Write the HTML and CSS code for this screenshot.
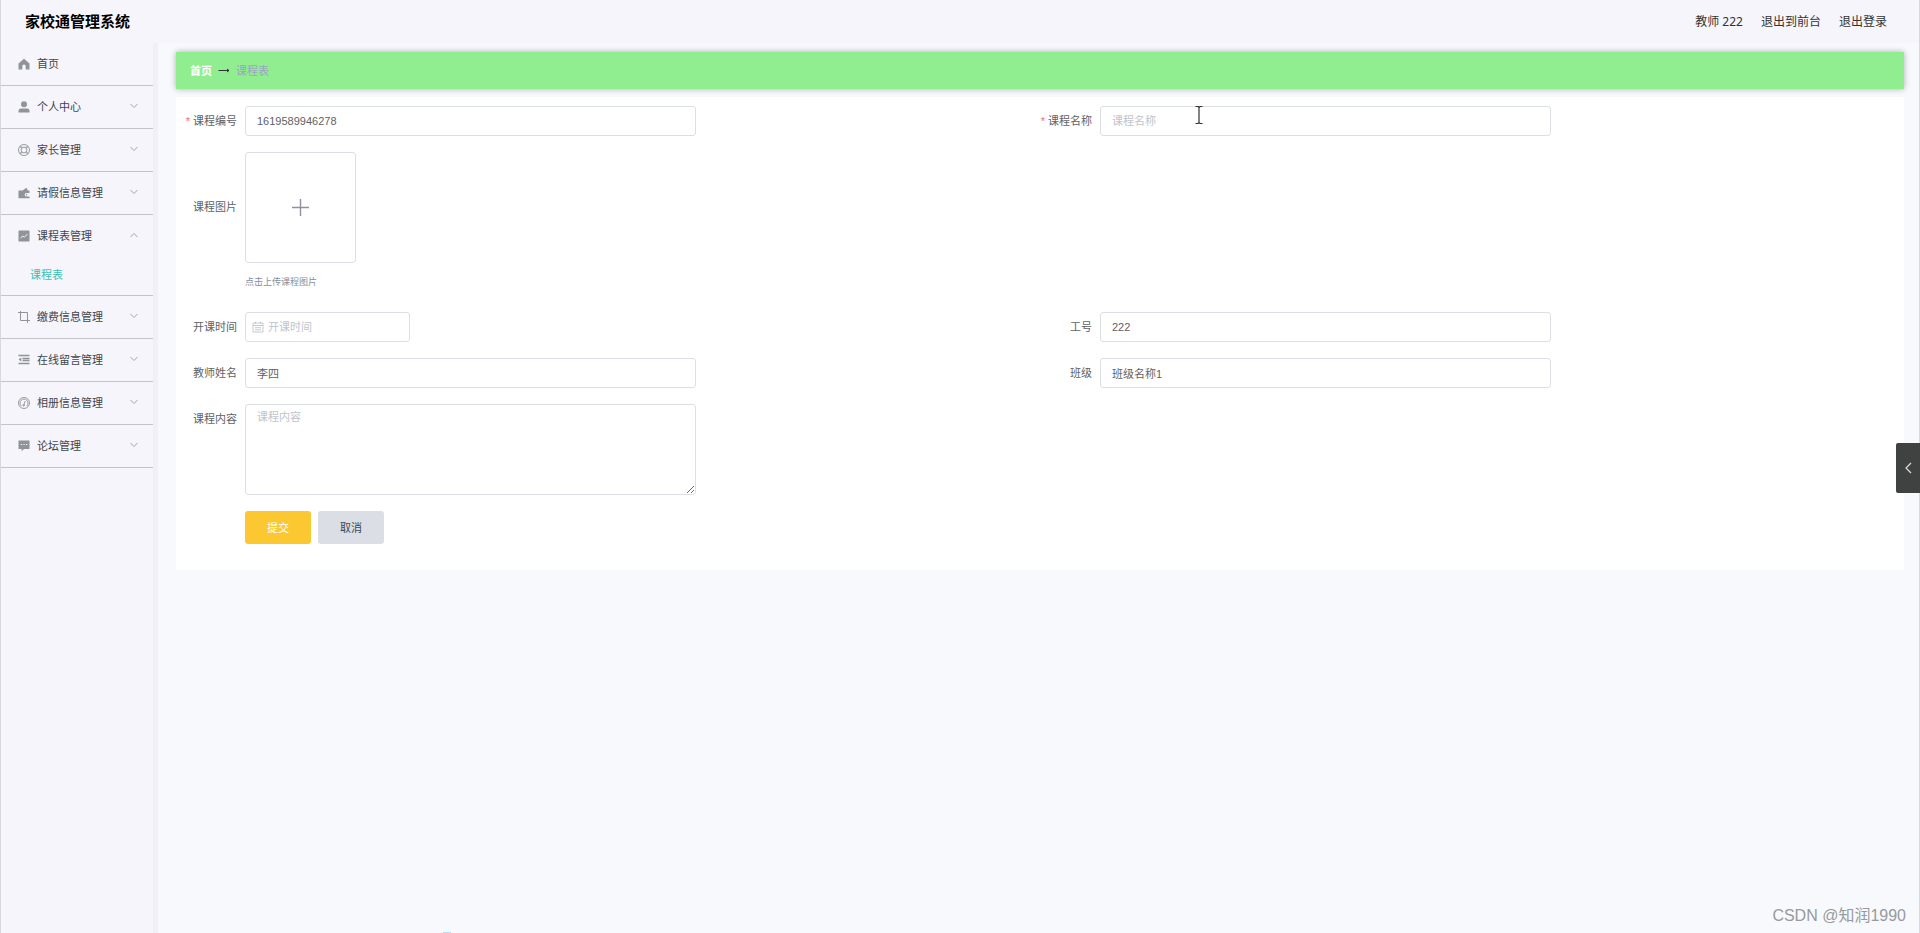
FILE: index.html
```html
<!DOCTYPE html>
<html lang="zh-CN">
<head>
<meta charset="utf-8">
<title>家校通管理系统</title>
<link rel="stylesheet" href="styles.css">
</head>
<body>
<svg class="defs" aria-hidden="true">
  <symbol id="down" viewBox="0 0 10 10"><path d="M1.5 2 5 5.500 8.500 2" fill="none" stroke="currentColor"/></symbol>
  <symbol id="up" viewBox="0 0 10 10"><path d="M1.5 6 5 2.500 8.500 6" fill="none" stroke="currentColor"/></symbol>
</svg>
<div class="app">
  <header class="header">
    <h1 class="title">家校通管理系统</h1>
    <nav class="user-nav">
      <span>教师 222</span>
      <a href="#">退出到前台</a>
      <a href="#">退出登录</a>
    </nav>
  </header>
  <div class="body">
    <aside class="sidebar">
      <ul class="menu">
        <li class="menu-item"><a class="menu-link" href="#">
          <svg class="icon" viewBox="0 0 12 12"><path fill="currentColor" d="M6 .8 11.500 5.500V11.500H7.700V8.200a1.700 1.700 0 0 0-3.400 0v3.300H.5v-6z"/></svg>
          <span>首页</span></a></li>
        <li class="menu-item"><a class="menu-link" href="#">
          <svg class="icon" viewBox="0 0 12 12"><circle cx="6" cy="3.300" r="3" fill="currentColor"/><path fill="currentColor" d="M.5 11.500V10q0-2.500 2.500-2.500h6q2.500 0 2.500 2.500v1.500z"/></svg>
          <span>个人中心</span><svg class="arrow"><use href="#down"/></svg></a></li>
        <li class="menu-item"><a class="menu-link" href="#">
          <svg class="icon" viewBox="0 0 12 12" fill="none" stroke="currentColor" stroke-width=".9"><circle cx="6" cy="6" r="5.500"/><circle cx="6" cy="6" r="2.900"/><path d="M2.300 1.900 4.200 3.700M1.800 2.500 3.600 4.300M9.700 1.900 7.800 3.700M10.200 2.500 8.400 4.300M2.300 10.100 4.200 8.300M1.800 9.500 3.600 7.700M9.700 10.100 7.800 8.300M10.200 9.500 8.400 7.700"/></svg>
          <span>家长管理</span><svg class="arrow"><use href="#down"/></svg></a></li>
        <li class="menu-item"><a class="menu-link" href="#">
          <svg class="icon" viewBox="0 0 12 12"><path fill="currentColor" d="M.5 3.500h4L8.500.8l1.300 2.700h1.700v2.600H8.300a1.500 1.500 0 0 0 0 3.300h3.200v1.900H.5z"/><circle cx="8.600" cy="7.700" r=".8" fill="currentColor"/></svg>
          <span>请假信息管理</span><svg class="arrow"><use href="#down"/></svg></a></li>
        <li class="menu-item"><a class="menu-link" href="#">
          <svg class="icon" viewBox="0 0 12 12"><rect x=".5" y=".5" width="11" height="11" rx=".6" fill="currentColor"/><path d="M2.500 8.300 4.600 6l1.800 1.200L9.500 4" fill="none" stroke="#f5f5fb"/></svg>
          <span>课程表管理</span><svg class="arrow"><use href="#up"/></svg></a>
          <a class="sub-link" href="#">课程表</a></li>
        <li class="menu-item"><a class="menu-link" href="#">
          <svg class="icon" viewBox="0 0 12 12" fill="none" stroke="currentColor"><path d="M2.500 0v9.500H12M0 1.500h9.500V12"/></svg>
          <span>缴费信息管理</span><svg class="arrow"><use href="#down"/></svg></a></li>
        <li class="menu-item"><a class="menu-link" href="#">
          <svg class="icon" viewBox="0 0 12 12"><path d="M.5 1.500h11M4.500 4.500h7M4.500 6.500h7M.5 9.500h11" stroke="currentColor" stroke-width="1.300"/><path d="M.5 5.500 3.300 3.500v4z" fill="currentColor"/></svg>
          <span>在线留言管理</span><svg class="arrow"><use href="#down"/></svg></a></li>
        <li class="menu-item"><a class="menu-link" href="#">
          <svg class="icon" viewBox="0 0 12 12" fill="none" stroke="currentColor" stroke-width=".9"><circle cx="6" cy="6" r="5.500"/><path d="M3.300 9a4 4 0 1 1 5.400 0M5.700 8.500 7.200 4"/><circle cx="5.700" cy="8.300" r=".8"/></svg>
          <span>相册信息管理</span><svg class="arrow"><use href="#down"/></svg></a></li>
        <li class="menu-item"><a class="menu-link" href="#">
          <svg class="icon" viewBox="0 0 12 12"><path fill="currentColor" d="M.5.500h11v8.500H6L3.700 11.300V9H.5z"/><path d="M2.800 4.500h1.300M5.400 4.500h1.300M8 4.500h1.300" stroke="#f5f5fb" stroke-width="1.200"/></svg>
          <span>论坛管理</span><svg class="arrow"><use href="#down"/></svg></a></li>
      </ul>
    </aside>
    <main class="main">
      <nav class="breadcrumb">
        <a class="crumb-home" href="#">首页</a>
        <svg class="crumb-arrow" viewBox="0 0 12 8"><path d="M.5 3.500h10.500M9 2 11 3.500 9 5" fill="none" stroke="currentColor"/></svg>
        <span class="crumb-current">课程表</span>
      </nav>
      <form class="card">
        <div class="field">
          <label class="label required" for="code">课程编号</label>
          <input class="input" id="code" type="text" value="1619589946278">
        </div>
        <div class="field">
          <label class="label required" for="name">课程名称</label>
          <input class="input" id="name" type="text" placeholder="课程名称">
        </div>
        <div class="field wide">
          <label class="label label-upload" for="picture">课程图片</label>
          <div class="upload">
            <button class="upload-box" id="picture" type="button" aria-label="上传课程图片">
              <svg class="plus" viewBox="0 0 17 17"><path d="M8.500 0v17M0 8.500h17" stroke="currentColor" stroke-width="1.400"/></svg>
            </button>
            <p class="tip">点击上传课程图片</p>
          </div>
        </div>
        <div class="field">
          <label class="label" for="time">开课时间</label>
          <div class="date">
            <svg class="calendar" viewBox="0 0 12 12" fill="none" stroke="currentColor" stroke-width=".9"><path d="M1 2h10v9H1zM1 4.500h10M3.500.7V3M8.500.7V3M3 6.700h6M3 8.800h6"/></svg>
            <input class="input input-date" id="time" type="text" placeholder="开课时间">
          </div>
        </div>
        <div class="field">
          <label class="label" for="job">工号</label>
          <input class="input" id="job" type="text" value="222">
        </div>
        <div class="field">
          <label class="label" for="teacher">教师姓名</label>
          <input class="input" id="teacher" type="text" value="李四">
        </div>
        <div class="field">
          <label class="label" for="class">班级</label>
          <input class="input" id="class" type="text" value="班级名称1">
        </div>
        <div class="field wide">
          <label class="label" for="content">课程内容</label>
          <textarea class="input textarea" id="content" placeholder="课程内容"></textarea>
        </div>
        <div class="actions wide">
          <button class="btn btn-primary" type="button">提交</button>
          <button class="btn" type="button">取消</button>
        </div>
      </form>
    </main>
  </div>
  <button class="drawer" type="button" aria-label="展开"><svg class="drawer-icon" viewBox="0 0 8 12"><path d="M7 1 2 6l5 5" fill="none" stroke="currentColor" stroke-width="1.200"/></svg></button>
  <svg class="cursor" viewBox="0 0 8 18"><path d="M.5.500h2.500L4 1.500 5 .5h2.500M4 1.500v15M.5 17.500H3l1-1 1 1h2.500" fill="none" stroke="#333" stroke-width="1.200"/></svg>
  <span class="spot"></span>
  <span class="watermark">CSDN @知润1990</span>
</div>
</body>
</html>
```
FILE: styles.css
```css
* {
  box-sizing: border-box;
}

body {
  margin: 0;
  font-family: "Liberation Sans", "Noto Sans CJK SC", sans-serif;
  font-size: 11px;
  line-height: 16px;
  color: #606266;
}

a {
  color: inherit;
  text-decoration: none;
}

.defs {
  position: absolute;
  width: 0;
  height: 0;
}

.app {
  position: relative;
  display: flex;
  flex-direction: column;
  min-height: 100vh;
  border: 0 solid #d8d9de;
  border-width: 0 1px;
  background: #f7f9fd;
}

.header {
  display: flex;
  align-items: center;
  justify-content: space-between;
  height: 43px;
  padding: 0 32px 0 24px;
  background: #f5f5fb;
}

.title {
  margin: 0;
  font-size: 15px;
  line-height: 20px;
  color: #000;
}

.user-nav {
  display: flex;
  gap: 18px;
  font-family: "Noto Sans", "Noto Sans CJK SC", sans-serif;
  font-size: 12px;
  color: #333;
}

.body {
  display: flex;
  flex: 1;
}

.sidebar {
  flex: none;
  width: 157px;
  padding-right: 5px;
  background: linear-gradient(to left, #f2f0f5 5px, #f5f5fb 5px);
}

.menu {
  margin: 0;
  padding: 0;
  list-style: none;
}

.menu-item {
  border-bottom: 1px solid #c3c3ca;
}

.menu-link {
  display: flex;
  align-items: center;
  height: 42px;
  padding: 0 14px 0 17px;
  color: #42454c;
}

.icon {
  width: 12px;
  height: 12px;
  margin-right: 7px;
  color: #909399;
}

.arrow {
  width: 10px;
  height: 10px;
  margin-left: auto;
  color: #a4a6ac;
}

.sub-link {
  display: block;
  padding: 10px 0 12px 29px;
  color: #3cbfb4;
}

.main {
  flex: 1;
  min-width: 0;
  padding: 9px 15px 0 18px;
}

.breadcrumb {
  display: flex;
  align-items: center;
  gap: 6px;
  height: 37px;
  padding: 0 14px;
  background: #90ee90;
  box-shadow: 0 0 6px rgba(0, 0, 0, 0.3);
}

.crumb-home {
  font-weight: 700;
  color: #fff;
}

.crumb-arrow {
  width: 12px;
  height: 8px;
  color: #303133;
}

.crumb-current {
  color: #97a8be;
}

.card {
  display: grid;
  grid-template-columns: 1fr 1fr;
  row-gap: 16px;
  margin-top: 8px;
  padding: 9px 9px 26px;
  background: #fff;
}

.wide {
  grid-column: 1 / -1;
}

.field {
  display: flex;
  align-items: flex-start;
}

.label {
  flex: none;
  width: 60px;
  padding-right: 8px;
  line-height: 30px;
  text-align: right;
  white-space: nowrap;
}

.label-upload {
  line-height: 110px;
}

.required::before {
  content: "*";
  margin-right: 3px;
  color: #f56c6c;
}

.input {
  width: 451px;
  height: 30px;
  padding: 0 11px;
  border: 1px solid #dcdfe6;
  border-radius: 3px;
  outline: 0;
  background: #fff;
  font: inherit;
  color: #606266;
}

.input::placeholder {
  color: #c0c4cc;
}

.textarea {
  height: 91px;
  padding: 4px 11px;
  resize: vertical;
}

.upload-box {
  display: grid;
  place-items: center;
  width: 111px;
  height: 111px;
  padding: 0;
  border: 1px solid #dcdfe6;
  border-radius: 3px;
  background: #fff;
  color: #8c939d;
}

.plus {
  width: 17px;
  height: 17px;
}

.tip {
  margin: 11px 0 6px;
  font-size: 9px;
  color: #838fa1;
}

.date {
  position: relative;
}

.calendar {
  position: absolute;
  top: 9px;
  left: 7px;
  width: 12px;
  height: 12px;
  color: #c0c4cc;
}

.input-date {
  width: 165px;
  padding-left: 22px;
}

.actions {
  display: flex;
  gap: 7px;
  padding-left: 60px;
}

.btn {
  width: 66px;
  height: 33px;
  padding: 0;
  border: 0;
  border-radius: 3px;
  background: #dcdee5;
  font: inherit;
  color: #42454c;
}

.btn-primary {
  background: #fcc832;
  color: #fff;
}

.drawer {
  position: absolute;
  top: 443px;
  right: -1px;
  display: grid;
  place-items: center;
  width: 24px;
  height: 50px;
  padding: 0;
  border: 0;
  border-radius: 2px 0 0 2px;
  background: #404141;
  color: #ddd;
}

.drawer-icon {
  width: 8px;
  height: 12px;
}

.cursor {
  position: absolute;
  top: 106px;
  left: 1194px;
  width: 8px;
  height: 18px;
}

.spot {
  position: absolute;
  bottom: 0;
  left: 442px;
  width: 8px;
  height: 1px;
  background: #b5dcfb;
}

.watermark {
  position: absolute;
  right: 13px;
  bottom: 7px;
  font-size: 16px;
  line-height: 20px;
  color: #97999d;
}
```
